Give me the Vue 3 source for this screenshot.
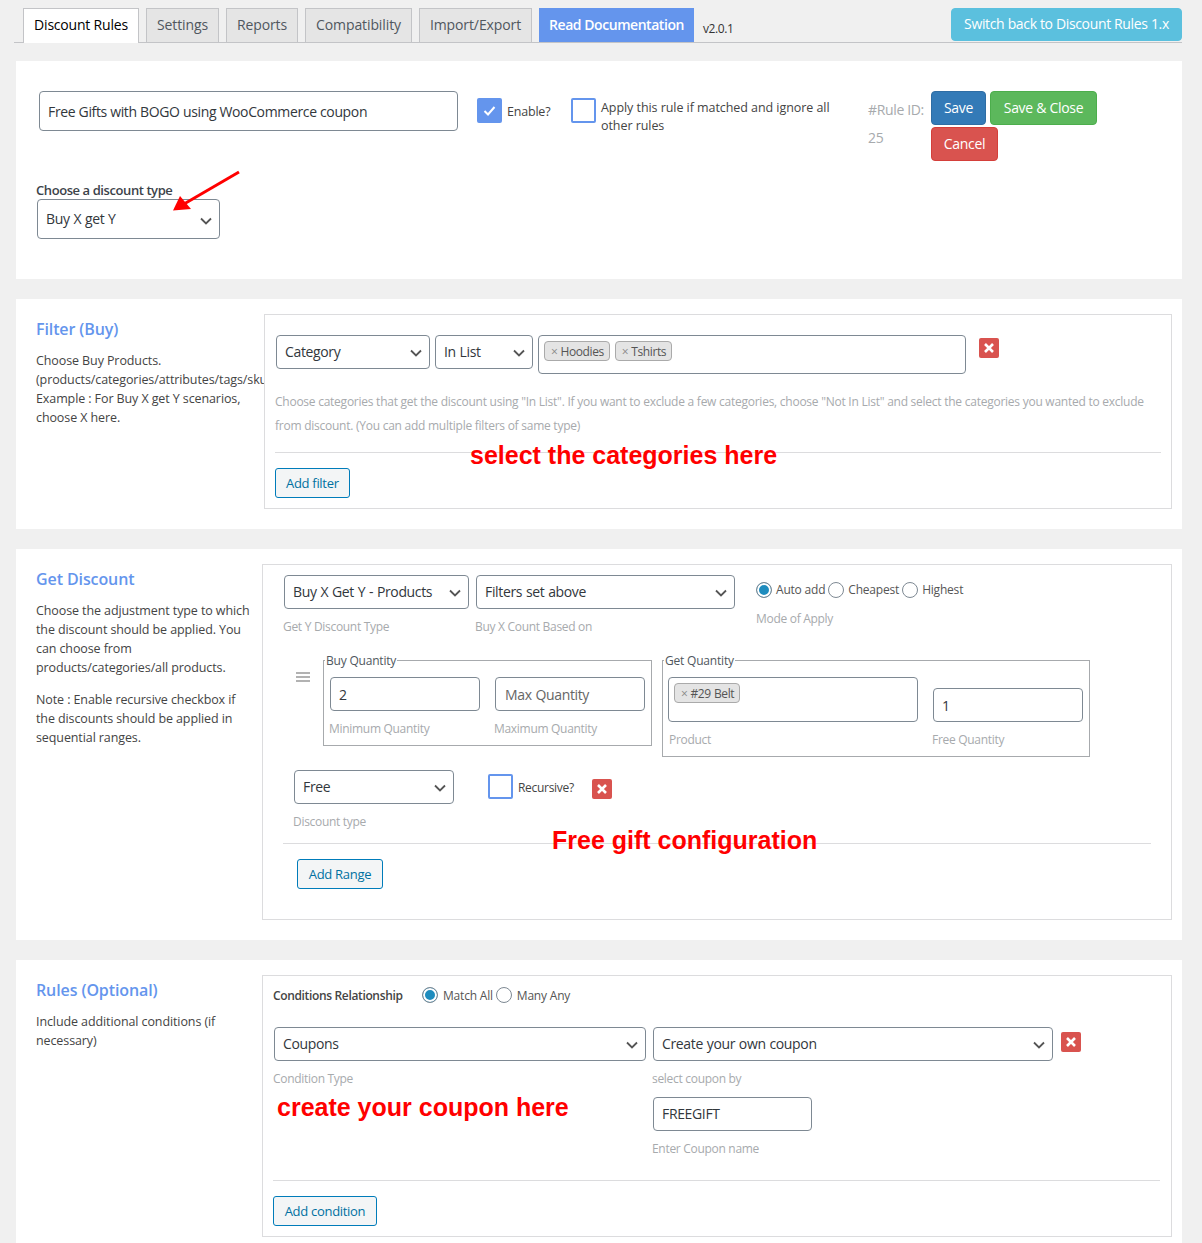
<template>
  <div class="page">
    <!-- 상단 탭 -->
    <div class="tabs">
      <a v-for="tab in tabs" :key="tab.label" class="tab" :class="{ active: tab.active }" :style="{ width: tab.width + 'px' }">{{ tab.label }}</a>
      <a class="tab tab-doc">Read Documentation</a>
      <span class="version">v2.0.1</span>
      <a class="switch-btn">Switch back to Discount Rules 1.x</a>
    </div>

    <!-- 규칙 헤더 -->
    <section class="card card-head">
      <div class="head-row">
        <div class="control title-input">Free Gifts with BOGO using WooCommerce coupon</div>
        <span class="check checked">
          <svg width="13" height="11" viewBox="0 0 13 11"><path d="M1.5 6l3.5 3.5L11.5 2" fill="none" stroke="#fff" stroke-width="2" /></svg>
        </span>
        <span class="check-label enable-label">Enable?</span>
        <span class="check apply-check"></span>
        <span class="check-label apply-label">Apply this rule if matched and ignore all other rules</span>
        <div class="rule-id">#Rule ID:<br />25</div>
        <div class="actions">
          <button class="btn btn-blue">Save</button>
          <button class="btn btn-green">Save &amp; Close</button>
          <button class="btn btn-red">Cancel</button>
        </div>
      </div>
      <div class="type-label">Choose a discount type</div>
      <div class="control select type-select">Buy X get Y<svg class="chev" width="12" height="8" viewBox="0 0 12 8"><path d="M1 1.5l5 5 5-5" fill="none" stroke="#555" stroke-width="1.8" /></svg></div>
      <svg class="red-arrow" width="70" height="46" viewBox="0 0 70 46">
        <path d="M68 4L13 36" stroke="#f00" stroke-width="3" fill="none" />
        <path d="M2 42.5L9 28L20 41Z" fill="#f00" />
      </svg>
    </section>

    <!-- Filter -->
    <section class="card card-filter">
      <div class="side filter-side">
        <h2>Filter (Buy)</h2>
        <p class="nowrap">Choose Buy Products.<br />(products/categories/attributes/tags/sku<br />Example : For Buy X get Y scenarios,<br />choose X here.</p>
      </div>
      <div class="panel filter-panel">
        <div class="row">
          <div class="control select w154">Category<svg class="chev" width="12" height="8" viewBox="0 0 12 8"><path d="M1 1.5l5 5 5-5" fill="none" stroke="#555" stroke-width="1.8" /></svg></div>
          <div class="control select w98">In List<svg class="chev" width="12" height="8" viewBox="0 0 12 8"><path d="M1 1.5l5 5 5-5" fill="none" stroke="#555" stroke-width="1.8" /></svg></div>
          <div class="control multi w428">
            <span class="chip"><i>×</i>Hoodies</span>
            <span class="chip"><i>×</i>Tshirts</span>
          </div>
          <span class="del filter-del"><svg width="12" height="12" viewBox="0 0 12 12"><path d="M2 2l8 8M10 2l-8 8" stroke="#fff" stroke-width="2.6" /></svg></span>
        </div>
        <p class="help">Choose categories that get the discount using "In List". If you want to exclude a few categories, choose "Not In List" and select the categories you wanted to exclude from discount. (You can add multiple filters of same type)</p>
        <hr />
        <button class="add-btn">Add filter</button>
        <span class="note note-filter">select the categories here</span>
      </div>
    </section>

    <!-- Get Discount -->
    <section class="card card-discount">
      <div class="side">
        <h2>Get Discount</h2>
        <p>Choose the adjustment type to which the discount should be applied. You can choose from products/categories/all products.</p>
        <p class="side-note">Note : Enable recursive checkbox if the discounts should be applied in sequential ranges.</p>
      </div>
      <div class="panel discount-panel">
        <div class="row top-row">
          <div class="field w185">
            <div class="control select">Buy X Get Y - Products<svg class="chev" width="12" height="8" viewBox="0 0 12 8"><path d="M1 1.5l5 5 5-5" fill="none" stroke="#555" stroke-width="1.8" /></svg></div>
            <label class="cap">Get Y Discount Type</label>
          </div>
          <div class="field w259">
            <div class="control select">Filters set above<svg class="chev" width="12" height="8" viewBox="0 0 12 8"><path d="M1 1.5l5 5 5-5" fill="none" stroke="#555" stroke-width="1.8" /></svg></div>
            <label class="cap">Buy X Count Based on</label>
          </div>
          <div class="mode">
            <div class="radios">
              <span class="radio on"></span><span>Auto add</span>
              <span class="radio"></span><span>Cheapest</span>
              <span class="radio"></span><span>Highest</span>
            </div>
            <label class="cap mode-cap">Mode of Apply</label>
          </div>
        </div>

        <div class="qty-row">
          <svg class="drag" width="14" height="10" viewBox="0 0 14 10"><path d="M0 1h14M0 5h14M0 9h14" stroke="#999" stroke-width="1.6" /></svg>
          <fieldset class="qty buy-qty">
            <legend>Buy Quantity</legend>
            <div class="qty-inner">
              <div class="field w150">
                <div class="control">2</div>
                <label class="cap">Minimum Quantity</label>
              </div>
              <div class="field w150">
                <div class="control placeholder">Max Quantity</div>
                <label class="cap">Maximum Quantity</label>
              </div>
            </div>
          </fieldset>
          <fieldset class="qty get-qty">
            <legend>Get Quantity</legend>
            <div class="qty-inner align-end">
              <div class="field w250">
                <div class="control multi belt"><span class="chip"><i>×</i>#29 Belt</span></div>
                <label class="cap">Product</label>
              </div>
              <div class="field w150">
                <div class="control">1</div>
                <label class="cap">Free Quantity</label>
              </div>
            </div>
          </fieldset>
        </div>

        <div class="free-row">
          <div class="field w160">
            <div class="control select">Free<svg class="chev" width="12" height="8" viewBox="0 0 12 8"><path d="M1 1.5l5 5 5-5" fill="none" stroke="#555" stroke-width="1.8" /></svg></div>
            <label class="cap">Discount type</label>
          </div>
          <span class="check recursive-check"></span>
          <span class="check-label recursive-label">Recursive?</span>
          <span class="del recursive-del"><svg width="12" height="12" viewBox="0 0 12 12"><path d="M2 2l8 8M10 2l-8 8" stroke="#fff" stroke-width="2.6" /></svg></span>
        </div>
        <hr class="discount-hr" />
        <button class="add-btn range-btn">Add Range</button>
        <span class="note note-gift">Free gift configuration</span>
      </div>
    </section>

    <!-- Rules -->
    <section class="card card-rules">
      <div class="side">
        <h2>Rules (Optional)</h2>
        <p>Include additional conditions (if necessary)</p>
      </div>
      <div class="panel rules-panel">
        <div class="relation">
          <strong>Conditions Relationship</strong>
          <div class="radios">
            <span class="radio on"></span><span>Match All</span>
            <span class="radio"></span><span>Many Any</span>
          </div>
        </div>
        <div class="row cond-row">
          <div class="field w372">
            <div class="control select">Coupons<svg class="chev" width="12" height="8" viewBox="0 0 12 8"><path d="M1 1.5l5 5 5-5" fill="none" stroke="#555" stroke-width="1.8" /></svg></div>
            <label class="cap">Condition Type</label>
          </div>
          <div class="field w400">
            <div class="control select">Create your own coupon<svg class="chev" width="12" height="8" viewBox="0 0 12 8"><path d="M1 1.5l5 5 5-5" fill="none" stroke="#555" stroke-width="1.8" /></svg></div>
            <label class="cap">select coupon by</label>
            <div class="control coupon-input">FREEGIFT</div>
            <label class="cap">Enter Coupon name</label>
          </div>
          <span class="del cond-del"><svg width="12" height="12" viewBox="0 0 12 12"><path d="M2 2l8 8M10 2l-8 8" stroke="#fff" stroke-width="2.6" /></svg></span>
        </div>
        <hr class="rules-hr" />
        <button class="add-btn cond-btn">Add condition</button>
        <span class="note note-coupon">create your coupon here</span>
      </div>
    </section>
  </div>
</template>

<script setup>
const tabs = [
  { label: 'Discount Rules', width: 116, active: true },
  { label: 'Settings', width: 73 },
  { label: 'Reports', width: 72 },
  { label: 'Compatibility', width: 107 },
  { label: 'Import/Export', width: 113 },
]
</script>

<style>
html,
body {
  margin: 0;
  background: #f0f0f0;
}
</style>

<style scoped>
.page {
  width: 1202px;
  height: 1243px;
  overflow: hidden;
  box-sizing: border-box;
  padding: 8px 20px 0 16px;
  font-family: 'Open Sans', 'Noto Sans', sans-serif;
  font-size: 13px;
  color: #3c434a;
}

/* 탭 */
.tabs {
  display: flex;
  align-items: flex-end;
  height: 34px;
  border-bottom: 1px solid #c3c4c7;
  margin-left: -2px;
  padding-left: 9px;
  gap: 7px;
}

.tab {
  box-sizing: border-box;
  height: 34px;
  line-height: 32px;
  text-align: center;
  font-size: 14px;
  letter-spacing: -0.1px;
  color: #50575e;
  background: #e5e5e5;
  border: 1px solid #c3c4c7;
  border-bottom: none;
  white-space: nowrap;
}

.tab.active {
  height: 35px;
  margin-bottom: -1px;
  background: #fff;
  color: #000;
  letter-spacing: -0.2px;
}

.tab-doc {
  width: 155px;
  background: #6495ed;
  border-color: #6495ed;
  color: #fff;
  font-weight: 600;
  letter-spacing: -0.45px;
}

.version {
  align-self: flex-end;
  margin: 0 0 5px 2px;
  font-size: 12px;
  letter-spacing: -0.4px;
  color: #333;
}

.switch-btn {
  box-sizing: border-box;
  margin-left: auto;
  width: 231px;
  height: 33px;
  margin-bottom: 1px;
  line-height: 29px;
  text-align: center;
  font-size: 14px;
  letter-spacing: -0.35px;
  color: #fff;
  background: #5bc0de;
  border: 1px solid #5bc0de;
  border-radius: 4px;
  white-space: nowrap;
}

/* 카드 */
.card {
  position: relative;
  background: #fff;
  display: flex;
  box-sizing: border-box;
  margin-bottom: 20px;
  padding: 15px 10px 20px 20px;
}

.card-head {
  display: block;
  height: 218px;
  margin-top: 18px;
  padding: 30px 0 0 21px;
}

.card-filter {
  height: 230px;
}

.card-discount {
  height: 391px;
}

.card-rules {
  height: 300px;
}

.side {
  width: 226px;
  flex: none;
  line-height: 19px;
  font-size: 12.5px;
  letter-spacing: -0.1px;
  color: #444;
}

.filter-side {
  width: 228px;
}

.side h2 {
  margin: 5px 0 12px;
  font-size: 16px;
  line-height: 20px;
  font-weight: 600;
  color: #6495ed;
}

.side p {
  margin: 0;
  max-width: 216px;
}

.side .side-note {
  margin-top: 13px;
}

.side .nowrap {
  white-space: nowrap;
}

.panel {
  position: relative;
  z-index: 1;
  flex: 1;
  box-sizing: border-box;
  background: #fff;
  border: 1px solid #dcdcde;
}

.filter-panel {
  height: 195px;
  padding: 20px 10px 0 10px;
}

.discount-panel {
  height: 356px;
  padding: 10px 20px 0 21px;
}

.rules-panel {
  height: 262px;
  padding: 10px 11px 0 10px;
}

/* 폼 */
.control {
  box-sizing: border-box;
  position: relative;
  height: 34px;
  line-height: 32px;
  padding: 0 8px;
  border: 1px solid #7e8993;
  border-radius: 4px;
  background: #fff;
  font-size: 14px;
  letter-spacing: -0.35px;
  word-spacing: 0.5px;
  color: #32373c;
  white-space: nowrap;
}

.placeholder {
  padding-left: 9px;
  color: #666;
}

.chev {
  position: absolute;
  right: 7px;
  top: 13px;
}

.row {
  display: flex;
  align-items: flex-start;
  gap: 5px;
}

.field {
  flex: none;
}

.w98 { width: 98px; }
.w150 { width: 150px; }
.w154 { width: 154px; margin-left: 1px; }
.w160 { width: 160px; }
.w185 { width: 185px; }
.w250 { width: 250px; }
.w259 { width: 259px; }
.w372 { width: 372px; }
.w400 { width: 400px; }
.w428 { width: 428px; }

.cap {
  display: block;
  margin: 9px 0 0 -1px;
  height: 17px;
  line-height: 17px;
  font-size: 12px;
  letter-spacing: -0.3px;
  color: #a7aaad;
  white-space: nowrap;
}

.w250 .cap {
  margin-left: 1px;
}

.multi {
  height: 39px;
  padding: 5px;
  display: flex;
  align-items: flex-start;
  gap: 5px;
}

.belt {
  height: 45px;
}

.chip {
  height: 20px;
  box-sizing: border-box;
  line-height: 19px;
  padding: 0 5px 0 6px;
  background: #e4e4e4;
  border: 1px solid #aaa;
  border-radius: 4px;
  font-size: 12px;
  letter-spacing: -0.4px;
  color: #555;
}

.chip i {
  font-style: normal;
  color: #888;
  margin-right: 3px;
}

.del {
  width: 20px;
  height: 20px;
  flex: none;
  display: flex;
  align-items: center;
  justify-content: center;
  background: #d9534f;
  border-radius: 2px;
}

.filter-del {
  margin: 3px 0 0 8px;
}

.check {
  box-sizing: border-box;
  width: 25px;
  height: 25px;
  flex: none;
  display: flex;
  align-items: center;
  justify-content: center;
  border: 2px solid #6495ed;
  border-radius: 2px;
  background: #fff;
}

.check.checked {
  background: #6495ed;
}

.check-label {
  font-size: 12.5px;
  letter-spacing: -0.2px;
  color: #444;
}

/* 헤더 행 */
.head-row {
  display: flex;
  align-items: flex-start;
  margin-left: 2px;
  height: 70px;
}

.title-input {
  width: 419px;
  height: 40px;
  line-height: 40px;
  margin-right: 19px;
  word-spacing: 0;
}

.head-row .check {
  margin-top: 7px;
}

.enable-label {
  margin: 11px 0 0 5px;
  width: 64px;
  line-height: 19px;
}

.apply-check {
  margin-right: 5px;
}

.apply-label {
  width: 245px;
  margin: 8px 21px 0 0;
  line-height: 18px;
  letter-spacing: -0.06px;
}

.rule-id {
  box-sizing: border-box;
  width: 64px;
  padding: 5px 0 0 1px;
  font-size: 14px;
  letter-spacing: -0.35px;
  line-height: 28px;
  color: #a7aaad;
  white-space: nowrap;
}

.actions {
  width: 175px;
  display: flex;
  flex-wrap: wrap;
  gap: 2px 4px;
}

.btn {
  box-sizing: border-box;
  height: 34px;
  padding: 0 0 2px;
  border: 1px solid transparent;
  border-radius: 4px;
  font-family: inherit;
  font-size: 14px;
  letter-spacing: -0.3px;
  color: #fff;
}

.btn-blue {
  width: 55px;
  background: #337ab7;
  border-color: #2e6da4;
}

.btn-green {
  width: 107px;
  background: #5cb85c;
  border-color: #4cae4c;
}

.btn-red {
  width: 67px;
  background: #d9534f;
  border-color: #d43f3a;
}

.type-label {
  margin-top: 20px;
  margin-left: -1px;
  line-height: 18px;
  font-size: 13px;
  letter-spacing: -0.42px;
  font-weight: 600;
  color: #3c434a;
}

.type-select {
  width: 183px;
  height: 40px;
  line-height: 38px;
  margin-top: 0;
}

.type-select .chev {
  top: 17px;
}

/* 강조 표시 */
.red-arrow {
  position: absolute;
  left: 155px;
  top: 107px;
}

.note {
  position: absolute;
  font-family: 'Liberation Sans', Arial, sans-serif;
  font-weight: 700;
  font-size: 25px;
  line-height: 30px;
  color: #f00;
  white-space: nowrap;
}

.note-filter {
  left: 205px;
  top: 125px;
}

.note-gift {
  left: 289px;
  top: 260px;
}

.note-coupon {
  left: 14px;
  top: 116px;
}

/* Filter */
.help {
  margin: 16px 0 0;
  line-height: 24px;
  font-size: 12px;
  letter-spacing: -0.25px;
  color: #a7aaad;
}

hr {
  margin: 14px 0 15px;
  border: none;
  border-top: 1px solid #dcdcde;
}

.add-btn {
  display: block;
  box-sizing: border-box;
  height: 30px;
  padding: 0 10px;
  border: 1px solid #007cba;
  border-radius: 3px;
  background: #f3f5f6;
  font-family: inherit;
  font-size: 13px;
  letter-spacing: -0.3px;
  color: #0071a1;
}

/* Get Discount */
.top-row {
  gap: 7px;
  height: 85px;
}

.mode {
  margin-left: 14px;
}

.radios {
  display: flex;
  align-items: center;
  gap: 3px;
  height: 17px;
  margin-top: 6px;
  font-size: 12px;
  letter-spacing: -0.2px;
  color: #555;
}

.radio {
  box-sizing: border-box;
  width: 16px;
  height: 16px;
  margin-right: 1px;
  border: 1px solid #7e8993;
  border-radius: 50%;
  background: #fff;
  display: inline-block;
}

.radio.on {
  background: #1e8cbe;
  box-shadow: inset 0 0 0 2px #fff;
}

.mode-cap {
  margin: 12px 0 0 0;
}

.qty-row {
  display: flex;
  align-items: flex-start;
  margin-left: 12px;
}

.drag {
  margin: 12px 13px 0 0;
  flex: none;
}

.qty {
  box-sizing: border-box;
  margin: -7px 0 0;
  padding: 0 6px 0 6px;
  min-width: 0;
  border: 1px solid #a7aaad;
}

.qty legend {
  padding: 0 1px;
  margin-left: -5px;
  line-height: 15px;
  font-size: 12px;
  letter-spacing: -0.2px;
  color: #50575e;
}

.buy-qty {
  width: 329px;
  height: 93px;
}

.get-qty {
  width: 428px;
  height: 104px;
  margin-left: 10px;
  padding-left: 5px;
}

.get-qty legend {
  margin-left: -4px;
}

.qty-inner {
  display: flex;
  gap: 15px;
  margin-top: 9px;
}

.qty-inner .control {
  line-height: 34px;
}

.align-end {
  align-items: flex-end;
}

.free-row {
  display: flex;
  align-items: flex-start;
  margin: 13px 0 0 10px;
  height: 60px;
}

.recursive-check {
  margin: 4px 5px 0 34px;
}

.recursive-label {
  font-size: 12px;
  letter-spacing: -0.3px;
  margin: 9px 18px 0 0;
}

.recursive-del {
  margin-top: 9px;
}

.discount-hr {
  margin: 13px 0 15px -1px;
  width: 868px;
}

.range-btn {
  width: 86px;
  margin-left: 13px;
  padding: 0;
}

/* Rules */
.relation {
  display: flex;
  align-items: center;
  height: 18px;
}

.relation strong {
  width: 149px;
  font-size: 12px;
  font-weight: 600;
  letter-spacing: -0.35px;
  color: #444;
}

.relation .radios {
  margin-top: 0;
}

.relation .radio {
  margin-right: 2px;
}

.cond-row {
  margin: 23px 0 0 1px;
  gap: 7px;
}

.coupon-input {
  width: 159px;
  margin: 10px 0 0 0;
}

.cond-del {
  margin: 5px 0 0 1px;
}

.rules-hr {
  margin: 23px 0 15px;
}

.cond-btn {
  width: 104px;
  padding: 0;
}
</style>
